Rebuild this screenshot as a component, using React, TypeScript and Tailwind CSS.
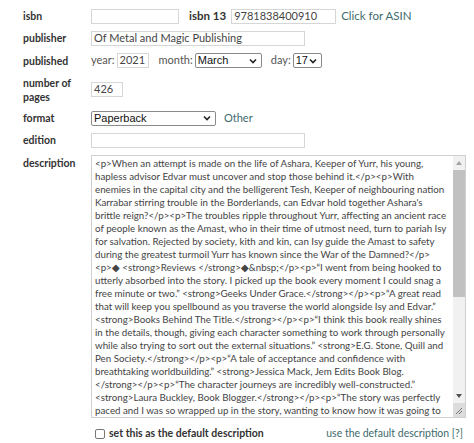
import React from "react";

const lines = [
  "<p>When an attempt is made on the life of Ashara, Keeper of Yurr, his young,",
  "hapless advisor Edvar must uncover and stop those behind it.</p><p>With",
  "enemies in the capital city and the belligerent Tesh, Keeper of neighbouring nation",
  "Karrabar stirring trouble in the Borderlands, can Edvar hold together Ashara's",
  "brittle reign?</p><p>The troubles ripple throughout Yurr, affecting an ancient race",
  "of people known as the Amast, who in their time of utmost need, turn to pariah Isy",
  "for salvation. Rejected by society, kith and kin, can Isy guide the Amast to safety",
  "during the greatest turmoil Yurr has known since the War of the Damned?</p>",
  "<p>◆ <strong>Reviews </strong>◆&nbsp;</p><p>\u201CI went from being hooked to",
  "utterly absorbed into the story. I picked up the book every moment I could snag a",
  "free minute or two.\u201D <strong>Geeks Under Grace.</strong></p><p>\u201CA great read",
  "that will keep you spellbound as you traverse the world alongside Isy and Edvar.\u201D",
  "<strong>Books Behind The Title.</strong></p><p>\u201CI think this book really shines",
  "in the details, though, giving each character something to work through personally",
  "while also trying to sort out the external situations.\u201D <strong>E.G. Stone, Quill and",
  "Pen Society.</strong></p><p>\u201CA tale of acceptance and confidence with",
  "breathtaking worldbuilding.\u201D <strong>Jessica Mack, Jem Edits Book Blog.",
  "</strong></p><p>\u201CThe character journeys are incredibly well-constructed.\u201D",
  "<strong>Laura Buckley, Book Blogger.</strong></p><p>\u201CThe story was perfectly",
  "paced and I was so wrapped up in the story, wanting to know how it was going to",
];

function Chevron() {
  return (
    <svg width="8" height="6" viewBox="0 0 8 6" className="shrink-0">
      <path d="M1 1.5 L4 4.5 L7 1.5" fill="none" stroke="#222" strokeWidth="1.6" />
    </svg>
  );
}

function Select({ value, className }: { value: string; className: string }) {
  return (
    <div
      className={`flex h-[15px] items-center justify-between rounded-[2px] border border-[#8a8a8a] bg-white pl-[2px] pr-[4px] font-['Liberation_Sans',sans-serif] text-[11px] text-[#111] ${className}`}
    >
      <span>{value}</span>
      <Chevron />
    </div>
  );
}

function Field({ value, className }: { value?: string; className: string }) {
  return (
    <div
      className={`flex h-[15px] items-center border border-[#d6d6d6] bg-white px-[2px] text-[11px] text-[#444] ${className}`}
    >
      {value}
    </div>
  );
}

function Label({ children }: { children: React.ReactNode }) {
  return <div className="w-[68px] shrink-0 text-[10.5px] font-bold leading-[14px] text-[#333]">{children}</div>;
}

export default function App() {
  return (
    <div className="h-[443px] w-[474px] overflow-hidden bg-white pl-[23px] pt-[5px] font-['Lato',sans-serif]">
      <div className="flex h-[22px] items-center">
        <Label>isbn</Label>
        <Field className="w-[88px]" />
        <span className="ml-[10px] text-[11.5px] font-bold text-[#333]">isbn 13</span>
        <Field value="9781838400910" className="ml-[5px] w-[105px]" />
        <span className="ml-[5px] text-[11.5px] text-[#3d6b6c]">Click for ASIN</span>
      </div>

      <div className="flex h-[22px] items-center">
        <Label>publisher</Label>
        <Field value="Of Metal and Magic Publishing" className="w-[214px]" />
      </div>

      <div className="flex h-[23px] items-center">
        <Label>published</Label>
        <span className="text-[11px] text-[#555]">year:</span>
        <Field value="2021" className="ml-[2px] w-[32px]" />
        <span className="ml-[10px] text-[11px] text-[#555]">month:</span>
        <Select value="March" className="ml-[2px] w-[67px]" />
        <span className="ml-[9px] text-[11px] text-[#555]">day:</span>
        <Select value="17" className="ml-[2px] w-[29px]" />
      </div>

      <div className="flex h-[35px] items-center">
        <Label>
          number of
          <br />
          pages
        </Label>
        <Field value="426" className="w-[32px]" />
      </div>

      <div className="flex h-[22px] items-center">
        <Label>format</Label>
        <Select value="Paperback" className="w-[125px]" />
        <span className="ml-[8px] text-[11px] text-[#3d6b6c]">Other</span>
      </div>

      <div className="flex h-[22px] items-center">
        <Label>edition</Label>
        <Field className="w-[214px]" />
      </div>

      <div className="mt-[4px] flex">
        <div className="pt-[1px]">
          <Label>description</Label>
        </div>
        <div className="flex h-[263px] w-[375px] border border-[#d0d0d0]">
          <div className="flex-1 overflow-hidden whitespace-nowrap pl-[3px] pt-[1px] text-[9.75px] leading-[13px] text-[#444]">
            {lines.map((l, i) => (
              <div key={i}>{l}</div>
            ))}
          </div>
          <div className="flex w-[12px] flex-col bg-[#f1f1f1]">
            <div className="flex h-[14px] items-center justify-center">
              <svg width="6" height="4" viewBox="0 0 6 4">
                <path d="M0 4 L3 0 L6 4 Z" fill="#a3a3a3" />
              </svg>
            </div>
            <div className="h-[127px] bg-[#c1c1c1]" />
            <div className="flex-1" />
            <div className="flex h-[14px] items-center justify-center">
              <svg width="6" height="4" viewBox="0 0 6 4">
                <path d="M0 0 L6 0 L3 4 Z" fill="#505050" />
              </svg>
            </div>
            <div className="flex h-[14px] items-end justify-end bg-[#dcdcdc] p-[2px]">
              <svg width="8" height="8" viewBox="0 0 8 8">
                <path d="M7 1 L1 7 M7 4 L4 7" stroke="#777" strokeWidth="1" />
              </svg>
            </div>
          </div>
        </div>
      </div>

      <div className="ml-[68px] mt-[8px] flex w-[375px] items-center">
        <div className="ml-[4px] h-[10px] w-[10px] rounded-[2px] border border-[#767676] bg-white" />
        <span className="ml-[4px] text-[10.5px] font-bold text-[#333]">set this as the default description</span>
        <span className="ml-auto mr-[3px] text-[10.5px] text-[#3d6b6c]">use the default description [?]</span>
      </div>
    </div>
  );
}
